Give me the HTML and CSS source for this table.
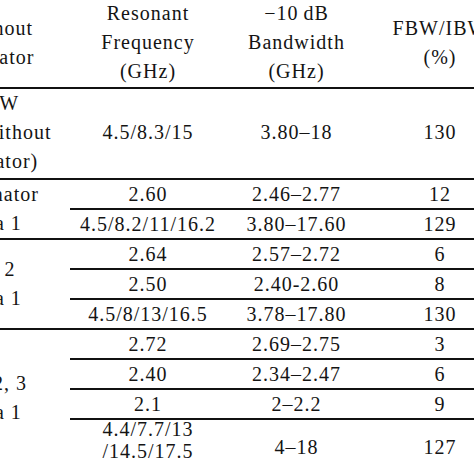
FILE: index.html
```html
<!DOCTYPE html>
<html>
<head>
<meta charset="utf-8">
<link rel="stylesheet" href="styles.css">
</head>
<body>
<table class="cmp">
  <colgroup>
    <col class="c-struct">
    <col class="c-freq">
    <col class="c-bw">
    <col class="c-fbw">
  </colgroup>
  <thead>
    <tr>
      <th>with/without<br>the resonator</th>
      <th>Resonant<br>Frequency<br>(GHz)</th>
      <th>&minus;10&thinsp;dB<br>Bandwidth<br>(GHz)</th>
      <th>FBW/IBW<br>(%)</th>
    </tr>
  </thead>
  <tbody>
    <tr class="r-base">
      <td class="grp">The CPW<br>antenna (without<br>the resonator)</td>
      <td>4.5/8.3/15</td>
      <td>3.80–18</td>
      <td>130</td>
    </tr>

    <tr>
      <td class="grp" rowspan="2">One resonator<br>Antenna 1</td>
      <td>2.60</td>
      <td>2.46–2.77</td>
      <td>12</td>
    </tr>
    <tr>
      <td>4.5/8.2/11/16.2</td>
      <td>3.80–17.60</td>
      <td>129</td>
    </tr>

    <tr>
      <td class="grp" rowspan="3">Res. 1, 2<br>Antenna 1</td>
      <td>2.64</td>
      <td>2.57–2.72</td>
      <td>6</td>
    </tr>
    <tr>
      <td>2.50</td>
      <td>2.40-2.60</td>
      <td>8</td>
    </tr>
    <tr>
      <td>4.5/8/13/16.5</td>
      <td>3.78–17.80</td>
      <td>130</td>
    </tr>

    <tr>
      <td class="grp grp-top" rowspan="4">Res. 1, 2, 3<br>Antenna 1</td>
      <td>2.72</td>
      <td>2.69–2.75</td>
      <td>3</td>
    </tr>
    <tr>
      <td>2.40</td>
      <td>2.34–2.47</td>
      <td>6</td>
    </tr>
    <tr>
      <td>2.1</td>
      <td>2–2.2</td>
      <td>9</td>
    </tr>
    <tr class="r-last">
      <td><div class="stack">4.4/7.7/13<br>/14.5/17.5</div></td>
      <td>4–18</td>
      <td>127</td>
    </tr>
  </tbody>
</table>
</body>
</html>
```

FILE: styles.css
```css
html, body {
  margin: 0;
  padding: 0;
  background: #ffffff;
  overflow: hidden;
}

body {
  width: 474px;
  height: 474px;
}

.cmp {
  border-collapse: separate;
  border-spacing: 0;
  table-layout: fixed;
  width: 631px;
  margin-left: -118px;
  margin-top: -1px;
  font-family: "Liberation Serif", "Times New Roman", serif;
  font-size: 20px;
  letter-spacing: 1px;
  color: #141414;
}

.c-struct { width: 188px; }
.c-freq { width: 156px; }
.c-bw { width: 141px; }
.c-fbw { width: 146px; }

.cmp th,
.cmp td {
  padding: 0;
  text-align: center;
  vertical-align: middle;
  white-space: nowrap;
  border-bottom: 2px solid #111111;
}

.cmp th {
  font-weight: normal;
  line-height: 29px;
  padding-bottom: 1px;
}

.cmp td {
  line-height: 28px;
}

.cmp .r-base td {
  line-height: 29px;
  padding-bottom: 2px;
}

.cmp td.grp {
  line-height: 29px;
}

.cmp td.grp-top {
  vertical-align: top;
  padding-top: 39px;
  border-bottom: none;
}

.cmp .r-last td {
  border-bottom: none;
  vertical-align: top;
  height: 54px;
  padding-top: 13px;
}

.cmp .r-last td:first-child {
  padding-top: 0;
}

.stack {
  line-height: 22px;
  margin-top: -2px;
}
```
